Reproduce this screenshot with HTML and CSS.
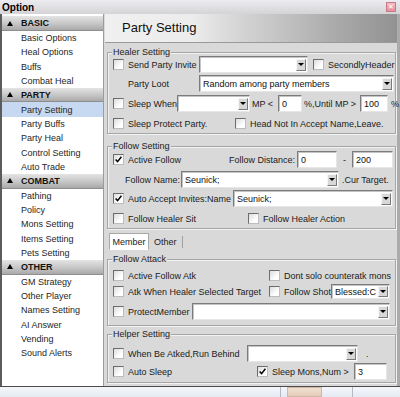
FILE: index.html
```html
<!DOCTYPE html>
<html>
<head>
<meta charset="utf-8">
<title>Option</title>
<link rel="stylesheet" href="styles.css">
</head>
<body>
<div class="window">
  <div class="titlebar"><span class="title">Option</span><span class="close">✕</span></div>
  <div class="main">
    <nav class="sidebar">
      <div class="cat"><svg class="tri" viewBox="0 0 6 5"><path d="M3 0L6 5H0Z"/></svg>BASIC</div>
      <div class="item">Basic Options</div>
      <div class="item">Heal Options</div>
      <div class="item">Buffs</div>
      <div class="item">Combat Heal</div>
      <div class="cat"><svg class="tri" viewBox="0 0 6 5"><path d="M3 0L6 5H0Z"/></svg>PARTY</div>
      <div class="item sel">Party Setting</div>
      <div class="item">Party Buffs</div>
      <div class="item">Party Heal</div>
      <div class="item">Control Setting</div>
      <div class="item">Auto Trade</div>
      <div class="cat"><svg class="tri" viewBox="0 0 6 5"><path d="M3 0L6 5H0Z"/></svg>COMBAT</div>
      <div class="item">Pathing</div>
      <div class="item">Policy</div>
      <div class="item">Mons Setting</div>
      <div class="item">Items Setting</div>
      <div class="item">Pets Setting</div>
      <div class="cat"><svg class="tri" viewBox="0 0 6 5"><path d="M3 0L6 5H0Z"/></svg>OTHER</div>
      <div class="item">GM Strategy</div>
      <div class="item">Other Player</div>
      <div class="item">Names Setting</div>
      <div class="item">AI Answer</div>
      <div class="item">Vending</div>
      <div class="item">Sound Alerts</div>
    </nav>
    <section class="content">
      <div class="header">Party Setting</div>
      <div class="panel">

        <div class="group healer">
          <div class="legend">Healer Setting</div>
          <div class="row hr1">
            <span class="cb"></span><span class="lbl w71">Send Party Invite</span>
            <span class="combo w109"><span class="val"></span><span class="arrow"></span></span>
            <span class="cb ml5"></span><span class="lbl">SecondlyHeader</span>
          </div>
          <div class="row hr2">
            <span class="lbl ml20 w71">Party Loot</span>
            <span class="combo w195"><span class="val">Random among party members</span><span class="arrow"></span></span>
          </div>
          <div class="row hr3">
            <span class="cb"></span><span class="lbl w49">Sleep When</span>
            <span class="combo w73"><span class="val"></span><span class="arrow"></span></span>
            <span class="lbl ml2 w25">MP &lt;</span>
            <span class="input ml1 w24">0</span>
            <span class="lbl ml2 w55">%,Until MP &gt;</span>
            <span class="input ml1 w28">100</span>
            <span class="lbl ml3">%.</span>
          </div>
          <div class="row hr4">
            <span class="cb"></span><span class="lbl w107">Sleep Protect Party.</span>
            <span class="cb ml0"></span><span class="lbl">Head Not In Accept Name,Leave.</span>
          </div>
        </div>

        <div class="group follow">
          <div class="legend">Follow Setting</div>
          <div class="row fr1">
            <span class="cb on"><svg viewBox="0 0 9 9"><path d="M1.6 4.4L3.6 6.6L7.4 1.8"/></svg></span><span class="lbl w101">Active Follow</span>
            <span class="lbl w68">Follow Distance:</span>
            <span class="input w40">0</span>
            <span class="lbl w15 center">-</span>
            <span class="input w41">200</span>
          </div>
          <div class="row fr2">
            <span class="lbl ml17 w56">Follow Name:</span>
            <span class="combo w158"><span class="val">Seunick;</span><span class="arrow"></span></span>
            <span class="lbl ml3">.Cur Target.</span>
          </div>
          <div class="row fr3">
            <span class="cb on"><svg viewBox="0 0 9 9"><path d="M1.6 4.4L3.6 6.6L7.4 1.8"/></svg></span><span class="lbl w105">Auto Accept Invites:Name</span>
            <span class="combo w160"><span class="val">Seunick;</span><span class="arrow"></span></span>
          </div>
          <div class="row fr4">
            <span class="cb"></span><span class="lbl w120">Follow Healer Sit</span>
            <span class="cb ml0"></span><span class="lbl">Follow Healer Action</span>
          </div>
        </div>

        <div class="tabs">
          <span class="tab active">Member</span>
          <span class="tab">Other</span>
        </div>

        <div class="group attack">
          <div class="legend">Follow Attack</div>
          <div class="row ar1">
            <span class="cb"></span><span class="lbl w141">Active Follow Atk</span>
            <span class="cb ml0"></span><span class="lbl">Dont solo counteratk mons</span>
          </div>
          <div class="row ar2">
            <span class="cb"></span><span class="lbl w141">Atk When Healer Selected Target</span>
            <span class="cb ml0"></span><span class="lbl w47">Follow Shot</span>
            <span class="combo small w59"><span class="val">Blessed:C</span><span class="arrow"></span></span>
          </div>
          <div class="row ar3">
            <span class="cb"></span><span class="lbl w64">ProtectMember</span>
            <span class="combo w198"><span class="val"></span><span class="arrow"></span></span>
          </div>
        </div>

        <div class="group helper">
          <div class="legend">Helper Setting</div>
          <div class="row pr1">
            <span class="cb"></span><span class="lbl w119">When Be Atked,Run Behind</span>
            <span class="combo w111"><span class="val"></span><span class="arrow"></span></span>
            <span class="lbl ml8">.</span>
          </div>
          <div class="row pr2">
            <span class="cb"></span><span class="lbl w129">Auto Sleep</span>
            <span class="cb on ml0"><svg viewBox="0 0 9 9"><path d="M1.6 4.4L3.6 6.6L7.4 1.8"/></svg></span><span class="lbl w82">Sleep Mons,Num &gt;</span>
            <span class="input w33">3</span>
          </div>
        </div>

      </div>
    </section>
  </div>
  <div class="taskbar"><span class="tb-sep"></span><span class="tb-item"></span><span class="tb-sep2"></span></div>
</div>
</body>
</html>
```

FILE: styles.css
```css
* { box-sizing: border-box; }
html, body { margin: 0; padding: 0; }
body {
  width: 400px;
  height: 397px;
  overflow: hidden;
  font-family: "Liberation Sans", Arial, sans-serif;
  font-size: 9px;
  color: #202020;
  background: #d9d9d9;
}
.window { width: 400px; height: 397px; display: flex; flex-direction: column; }

/* title bar */
.titlebar {
  flex: none;
  height: 14px;
  display: flex;
  align-items: center;
  padding-left: 2px;
  background: linear-gradient(#ececf0, #d4d4d7);
}
.title { font-weight: bold; font-size: 10px; color: #000; }
.close {
  margin-left: auto;
  margin-right: 4px;
  width: 10px;
  height: 10px;
  border: 1px solid #c97a86;
  background: linear-gradient(#f4bcc5, #e68d9e);
  color: #fff;
  font-size: 7px;
  line-height: 8px;
  text-align: center;
  font-family: "DejaVu Sans", sans-serif;
}

/* main area */
.main {
  flex: none;
  height: 372px;
  display: flex;
  border-left: 2px solid #5c5c5c;
  border-right: 3px solid #ababab;
}
.sidebar {
  flex: none;
  width: 102px;
  background: #fff;
  border-right: 1px solid #9c9c9c;
  padding-top: 2.4px;
}
.cat, .item {
  height: 14.35px;
  display: flex;
  align-items: center;
  white-space: nowrap;
}
.item { padding-left: 19px; color: #262626; }
.cat {
  padding-left: 5px;
  font-weight: bold;
  color: #111;
  background: linear-gradient(#e4e4e4, #c6c6c6 55%, #a9a9a9);
  border-bottom: 1px solid #8e8e8e;
}
.tri { width: 6px; height: 5px; margin-right: 8px; fill: #000; }
.sel { background: #c6d9f1; }

.content { flex: 1; min-width: 0; display: flex; flex-direction: column; }
.header {
  flex: none;
  height: 29px;
  margin-left: 1px;
  padding-left: 17px;
  font-size: 13px;
  line-height: 27px;
  color: #111;
  border-bottom: 1px solid #9a9a9a;
  background: linear-gradient(to right, #f0f0f0 0%, #ececec 30%, #e0e0e0 38%, #d2d2d2 48%, #c6c6c6 58%, #bcbcbc 66%, #aeaeae 76%, #a2a2a2 86%, #929292 100%);
}
.panel { flex: 1; padding: 0 1px 0 3px; }

/* group boxes */
.group {
  border: 1px solid #a6a6a6;
  box-shadow: 1px 1px 0 #f2f2f2, inset 1px 1px 0 #f2f2f2;
}
.legend {
  width: fit-content;
  height: 11px;
  line-height: 11px;
  margin: -6px 0 0 4px;
  padding: 0 1px;
  background: #d9d9d9;
  color: #222;
}
.healer { margin-top: 9px; padding-bottom: 1px; }
.follow { margin-top: 12px; padding-bottom: 1px; }
.attack { margin-top: 9px; padding-bottom: 5px; }
.helper { margin-top: 8px; padding-bottom: 2px; }

.row { display: flex; align-items: center; height: 17px; white-space: nowrap; }
.hr1 { margin-top: -2px; }
.hr2 { margin-top: 2px; }
.hr3 { margin-top: 3px; }
.hr4 { margin-top: 3px; }
.fr1 { margin-top: -1px; }
.fr2 { margin-top: 3px; }
.fr3 { margin-top: 2px; }
.fr4 { margin-top: 3px; }
.ar1 { margin-top: 2px; }
.ar2 { margin-top: -1px; }
.ar3 { margin-top: 3px; }
.pr1 { margin-top: 5px; }
.pr2 { margin-top: 1px; }

/* controls */
.cb {
  flex: none;
  width: 11px;
  height: 11px;
  margin-left: 5px;
  border: 1px solid;
  border-color: #6c6c6c #bdbdbd #bdbdbd #6c6c6c;
  background: linear-gradient(135deg, #dcdcdc, #ffffff 70%);
  display: flex;
}
.cb svg { width: 9px; height: 9px; }
.cb path { fill: none; stroke: #000; stroke-width: 1.5; }
.lbl { flex: none; overflow: hidden; }
.cb + .lbl { margin-left: 4px; }
.center { text-align: center; }

.combo, .input {
  flex: none;
  height: 17px;
  display: flex;
  align-items: center;
  background: #fff;
  border: 1px solid;
  border-color: #7b7b7b #e6e6e6 #e6e6e6 #7b7b7b;
  box-shadow: inset 1px 1px 0 #c4c4c4;
  padding-left: 3px;
  color: #111;
  overflow: hidden;
}
.combo.small { height: 15px; }
.val { flex: 1; overflow: hidden; }
.arrow {
  flex: none;
  width: 10px;
  height: 12px;
  margin-right: 1px;
  border: 1px solid;
  border-color: #f6f6f6 #7a7a7a #7a7a7a #f6f6f6;
  background: #d8d8d8;
  display: flex;
  align-items: center;
  justify-content: center;
}
.small .arrow { height: 11px; }
.arrow::after {
  content: "";
  border-left: 3px solid transparent;
  border-right: 3px solid transparent;
  border-top: 3px solid #000;
}

/* spacing / width utilities */
.ml0 { margin-left: 0; }
.ml1 { margin-left: 1px; }
.ml2 { margin-left: 2px; }
.ml3 { margin-left: 3px; }
.ml5 { margin-left: 5px; }
.ml8 { margin-left: 8px; }
.ml17 { margin-left: 17px; }
.ml20 { margin-left: 20px; }
.w15 { width: 15px; }
.w24 { width: 24px; }
.w25 { width: 25px; }
.w28 { width: 28px; }
.w33 { width: 33px; }
.w40 { width: 40px; }
.w41 { width: 41px; }
.w47 { width: 47px; }
.w49 { width: 49px; }
.w55 { width: 55px; }
.w56 { width: 56px; }
.w59 { width: 59px; }
.w64 { width: 64px; }
.w68 { width: 68px; }
.w71 { width: 71px; }
.w73 { width: 73px; }
.w82 { width: 82px; }
.w101 { width: 101px; }
.w105 { width: 105px; }
.w107 { width: 107px; }
.w109 { width: 109px; }
.w111 { width: 111px; }
.w119 { width: 119px; }
.w120 { width: 120px; }
.w129 { width: 129px; }
.w141 { width: 141px; }
.w158 { width: 158px; }
.w160 { width: 160px; }
.w195 { width: 195px; }
.w198 { width: 198px; }

/* tabs */
.tabs { display: flex; height: 17px; margin-top: 4px; align-items: center; }
.tab { flex: none; height: 17px; display: flex; align-items: center; color: #222; }
.tab.active {
  margin-left: 2px;
  width: 40px;
  justify-content: center;
  background: #fff;
  border: 1px solid #a8a8a8;
  border-bottom-color: #fff;
}
.tab + .tab {
  margin-left: 5px;
  width: 29px;
  height: 12px;
  border-right: 1px solid #a0a0a0;
}

/* bottom strip */
.taskbar {
  flex: none;
  height: 11px;
  display: flex;
  border-top: 1px solid #4a4a4a;
  background: linear-gradient(#f4f6fa, #e6eaf2);
}
.tb-sep { margin-left: 280px; width: 1px; background: #b4b8c4; }
.tb-item { margin-left: 6px; width: 35px; background: linear-gradient(#f0e0d0, #e4cdb8); border: 1px solid #cfb9a6; }
.tb-sep2 { margin-left: 30px; width: 1px; background: #b4b8c4; }
```
